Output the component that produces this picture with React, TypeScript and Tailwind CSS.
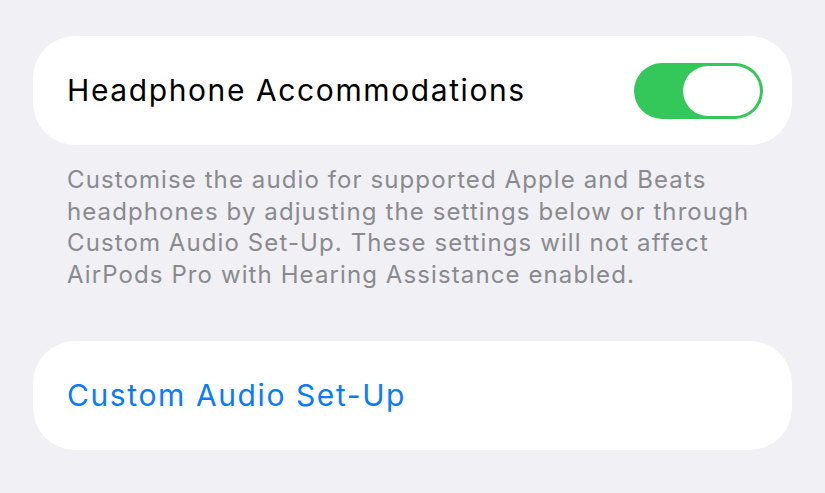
export default function App() {
  return (
    <div className="w-[825px] h-[493px] overflow-hidden bg-[#f0f0f5] px-[33px] pt-[36px] font-['Inter','Noto_Sans',sans-serif]">
      <div className="h-[109px] rounded-[42px] bg-white flex items-center justify-between pl-[34px] pr-[29px]">
        <span className="text-[30px] text-black tracking-[1.6px]">Headphone Accommodations</span>
        <Toggle />
      </div>
      <p className="mt-[19px] pl-[34px] pr-[30px] text-[24px] leading-[31.5px] tracking-[1.1px] text-[#8a8a8e]">
        Customise the audio for supported Apple and Beats headphones by adjusting the settings below or through Custom Audio Set-Up. These settings will not affect AirPods Pro with Hearing Assistance enabled.
      </p>
      <div className="mt-[51px] h-[109px] rounded-[42px] bg-white flex items-center pl-[34px]">
        <span className="text-[30px] text-[#0a7aff] tracking-[1.6px]">Custom Audio Set-Up</span>
      </div>
    </div>
  );
}

function Toggle() {
  return (
    <div className="w-[129px] h-[56px] rounded-full bg-[#34c759] flex items-center justify-end pr-[3px]">
      <div className="w-[77px] h-[50px] rounded-full bg-white" />
    </div>
  );
}
